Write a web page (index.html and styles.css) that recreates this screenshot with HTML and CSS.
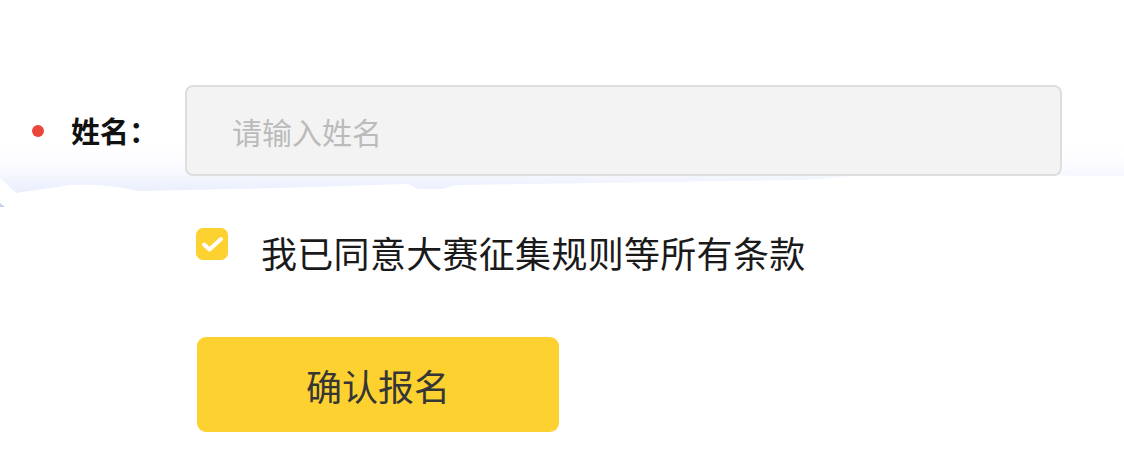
FILE: index.html
```html
<!DOCTYPE html>
<html lang="zh-CN">
<head>
<meta charset="utf-8">
<title>报名</title>
<link rel="stylesheet" href="styles.css">
</head>
<body>
<div class="page">
  <svg class="bg" width="1124" height="80" viewBox="0 0 1124 80" aria-hidden="true">
    <defs>
      <linearGradient id="cloud" x1="0" y1="0" x2="0" y2="1">
        <stop offset="0" stop-color="#ffffff" stop-opacity="0"/>
        <stop offset="0.6" stop-color="#f8f9ff"/>
        <stop offset="1" stop-color="#e8eefc"/>
      </linearGradient>
    </defs>
    <path d="M0 0 H1124 V36 C1000 36 920 33 880 34 C840 36 820 40 800 40 L460 45 C450 45 447 49 440 49 L420 49 C414 49 413 44 406 44 L280 48 L140 51 C110 45 90 44 70 45 L16 53 L0 38 Z" fill="url(#cloud)"/>
    <path d="M0 63 L5 67 L0 67 Z" fill="#c3d2f5"/>
  </svg>
  <form class="form">
    <div class="field">
      <span class="dot"></span>
      <label class="label" for="name">姓名：</label>
      <input class="input" id="name" type="text" placeholder="请输入姓名">
    </div>
    <div class="agree">
      <span class="check">
        <svg class="check-icon" width="32" height="32" viewBox="0 0 32 32" aria-hidden="true"><polyline points="8,16.5 13.5,21.5 25,11" fill="none" stroke="#fff" stroke-width="4" stroke-linecap="round" stroke-linejoin="round"/></svg>
      </span>
      <span class="agree-text">我已同意大赛征集规则等所有条款</span>
    </div>
    <button class="submit" type="button">确认报名</button>
  </form>
</div>
</body>
</html>
```
FILE: styles.css
```css
body {
  margin: 0;
  background: #fff;
  font-family: "Noto Sans CJK SC", "Noto Sans", sans-serif;
}
.page {
  position: relative;
  width: 1124px;
  height: 458px;
  overflow: hidden;
}
.bg {
  position: absolute;
  left: 0;
  top: 140px;
  z-index: 0;
}
.form {
  position: relative;
  z-index: 1;
  margin: 0;
  padding-top: 85px;
  display: flex;
  flex-direction: column;
  align-items: flex-start;
}
.field {
  display: flex;
  align-items: center;
  height: 91px;
}
.dot {
  width: 12px;
  height: 12px;
  border-radius: 50%;
  background: #e9473a;
  margin-left: 32px;
}
.label {
  margin-left: 27px;
  width: 114px;
  font-size: 29px;
  font-weight: 700;
  color: #111;
  line-height: 1;
}
.input {
  box-sizing: border-box;
  width: 877px;
  height: 91px;
  border: 2px solid #dedede;
  border-radius: 8px;
  background: #f3f3f3;
  padding: 0 0 0 45px;
  font-family: inherit;
  font-size: 30px;
  color: #333;
  outline: none;
}
.input::placeholder {
  color: #bbbbbb;
}
.agree {
  display: flex;
  align-items: flex-start;
  margin: 52px 0 0 196px;
}
.check {
  flex: 0 0 32px;
  width: 32px;
  height: 32px;
  border-radius: 7px;
  background: #fdd230;
  display: flex;
}
.check-icon {
  display: block;
  width: 32px;
  height: 32px;
}
.agree-text {
  margin-left: 33px;
  font-size: 36px;
  letter-spacing: 0.3px;
  line-height: 1;
  color: #1a1a1a;
  margin-top: 6px;
}
.submit {
  margin: 67px 0 0 197px;
  width: 362px;
  height: 95px;
  border: none;
  border-radius: 9px;
  background: #fdd230;
  font-family: inherit;
  font-size: 36px;
  color: #363636;
  padding: 0;
}
```
